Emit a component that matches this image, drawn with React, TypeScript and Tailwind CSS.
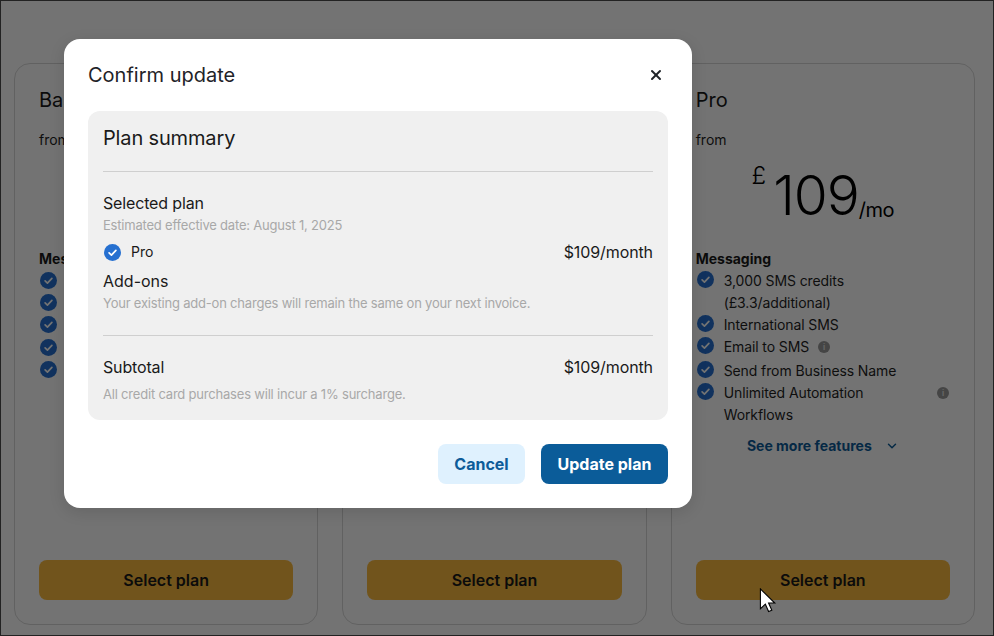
import { ChevronDown, X } from "lucide-react";

const font = "font-['Inter','Noto_Sans',sans-serif]";

function CheckBadge({ className = "" }: { className?: string }) {
  return (
    <svg viewBox="0 0 16 16" className={`h-[17px] w-[17px] shrink-0 ${className}`}>
      <circle cx="8" cy="8" r="8" fill="#2670d0" />
      <path d="M4.8 8.3l2.2 2.1 4.2-4.4" fill="none" stroke="#fff" strokeWidth="1.6" strokeLinecap="round" strokeLinejoin="round" />
    </svg>
  );
}

function InfoDot({ className = "" }: { className?: string }) {
  return (
    <span className={`flex h-3 w-3 shrink-0 items-center justify-center rounded-full bg-[#9a9a9a] text-[8px] font-bold leading-none text-[#e0e0e0] ${className}`}>
      i
    </span>
  );
}

function Feature({ children, rowClass = "" }: { children: React.ReactNode; rowClass?: string }) {
  return (
    <li className={`flex items-start text-sm leading-[22px] tracking-[-0.1px] text-[#1f1f1f] ${rowClass}`}>
      <CheckBadge className="ml-px mr-[10px] mt-px" />
      {children}
    </li>
  );
}

function SelectButton() {
  return (
    <button className="mt-auto flex h-10 w-full items-center justify-center rounded-lg bg-[#fbbb3e] text-base font-semibold text-[#1a1a1a]">
      Select plan
    </button>
  );
}

function Row({ left, right, className = "" }: { left: React.ReactNode; right: string; className?: string }) {
  return (
    <div className={`flex items-center justify-between ${className}`}>
      {left}
      <span className="text-base tracking-[-0.1px] text-[#1a1a1a]">{right}</span>
    </div>
  );
}

export default function App() {
  return (
    <div className={`relative h-[636px] w-[994px] overflow-hidden bg-white ${font}`}>
      <div className="grid h-full grid-cols-3 gap-6 pl-[14px] pr-[19px] pt-[63px] pb-[11px]">
        <div className="flex flex-col rounded-2xl border border-[#d8d8d8] px-6 pb-6 pt-6">
          <h3 className="text-xl leading-6 text-[#1a1a1a]">Basic</h3>
          <p className="mt-[18px] text-sm leading-5 text-[#1f1f1f]">from</p>
          <p className="mt-[99px] text-sm font-bold leading-5 text-[#1a1a1a]">Messaging</p>
          <ul className="mt-[2px] flex flex-col">
            <Feature>&nbsp;</Feature>
            <Feature>&nbsp;</Feature>
            <Feature>&nbsp;</Feature>
            <Feature rowClass="mt-px">&nbsp;</Feature>
            <Feature>&nbsp;</Feature>
          </ul>
          <SelectButton />
        </div>
        <div className="flex flex-col rounded-2xl border border-[#d8d8d8] px-6 pb-6 pt-6">
          <SelectButton />
        </div>
        <div className="flex flex-col rounded-2xl border border-[#d8d8d8] px-6 pb-6 pt-6">
          <h3 className="text-xl leading-6 text-[#1a1a1a]">Pro</h3>
          <p className="mt-[18px] text-sm leading-5 text-[#1f1f1f]">from</p>
          <div className="mt-[11px] flex h-[62px] items-end justify-center text-black">
            <span className="mb-[35px] mr-[7px] text-2xl font-light leading-none">£</span>
            <span className="text-[55px] font-light leading-none tracking-[-1px]">109</span>
            <span className="mb-[3px] text-xl leading-none tracking-[-0.5px]">/mo</span>
          </div>
          <p className="mt-[26px] text-sm font-bold leading-5 text-[#1a1a1a]">Messaging</p>
          <ul className="mt-[1px] flex flex-col">
            <Feature>
              <span>
                3,000 SMS credits
                <br />
                (£3.3/additional)
              </span>
            </Feature>
            <Feature>International SMS</Feature>
            <Feature>
              Email to SMS
              <InfoDot className="ml-[9px] mt-[5px]" />
            </Feature>
            <Feature rowClass="mt-[2px]">Send from Business Name</Feature>
            <Feature>
              <span>
                Unlimited Automation
                <br />
                Workflows
              </span>
              <InfoDot className="ml-auto mr-[1px] mt-[5px]" />
            </Feature>
          </ul>
          <button className="mt-[10px] flex items-center justify-center gap-[13px] text-sm font-bold text-[#0d5c99]">
            See more features
            <ChevronDown size={14} strokeWidth={2.5} />
          </button>
          <SelectButton />
        </div>
      </div>

      {/* dim layer */}
      <div className="absolute inset-0 bg-black/55" />

      {/* window edge */}
      <div className="pointer-events-none absolute inset-0 border border-[#222]" />

      <div className="absolute left-[64px] top-[39px] flex h-[469px] w-[628px] flex-col rounded-2xl bg-white p-6 shadow-[0_4px_16px_rgba(0,0,0,0.12)]">
        <div className="flex h-6 items-center justify-between">
          <h2 className="text-xl text-[#1f2328]">Confirm update</h2>
          <X size={16} strokeWidth={3} className="mr-1 text-[#1f2328]" />
        </div>
        <div className="mt-6 flex h-[309px] flex-col rounded-xl bg-[#f0f0f0] px-[15px] pt-[15px]">
          <h3 className="text-xl leading-6 tracking-[-0.15px] text-[#1a1a1a]">Plan summary</h3>
          <div className="mt-[21px] h-px bg-[#cfcfcf]" />
          <p className="mt-[21px] text-base leading-5 tracking-[-0.15px] text-[#1a1a1a]">Selected plan</p>
          <p className="mt-[3px] text-[13px] leading-[18px] tracking-[-0.2px] text-[#a8a8a8]">Estimated effective date: August 1, 2025</p>
          <Row
            className="mt-[8px] h-5"
            left={
              <span className="flex items-center gap-[10px] text-sm text-[#1a1a1a]">
                <CheckBadge className="ml-px" />
                Pro
              </span>
            }
            right="$109/month"
          />
          <p className="mt-[9px] text-base leading-5 text-[#1a1a1a]">Add-ons</p>
          <p className="mt-[3px] text-[13px] leading-[18px] tracking-[-0.2px] text-[#a8a8a8]">
            Your existing add-on charges will remain the same on your next invoice.
          </p>
          <div className="mt-[23px] h-px bg-[#cfcfcf]" />
          <Row
            className="mt-[21px] h-5"
            left={<span className="text-base tracking-[-0.15px] text-[#1a1a1a]">Subtotal</span>}
            right="$109/month"
          />
          <p className="mt-[8px] text-[13px] leading-[18px] tracking-[-0.2px] text-[#a8a8a8]">All credit card purchases will incur a 1% surcharge.</p>
        </div>
        <div className="mt-6 flex justify-end gap-4">
          <button className="flex h-10 w-[87px] items-center justify-center rounded-lg bg-[#dff1fe] text-base font-bold text-[#0d5c99]">
            Cancel
          </button>
          <button className="flex h-10 w-[127px] items-center justify-center rounded-lg bg-[#0b5c99] text-base font-bold text-white">
            Update plan
          </button>
        </div>
      </div>

      {/* mouse pointer */}
      <svg viewBox="0 0 20 30" className="absolute left-[759px] top-[588px] h-[27px] w-[19px]">
        <path d="M1 1v22l5.5-5 3.6 8.2 3.6-1.5-3.6-8H17z" fill="#fff" stroke="#000" strokeWidth="1.2" />
      </svg>
    </div>
  );
}
